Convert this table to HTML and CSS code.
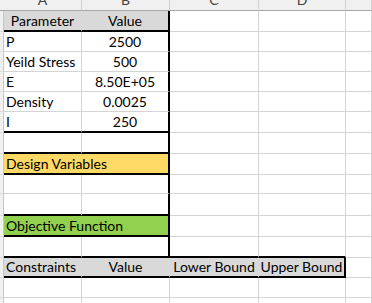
FILE: index.html
```html
<!DOCTYPE html>
<html lang="en">
<head>
<meta charset="utf-8">
<title>Sheet</title>
<link rel="stylesheet" href="styles.css">
</head>
<body>
<div class="sheet">
  <div class="hd corner"></div><div class="hd">A</div><div class="hd">B</div><div class="hd">C</div><div class="hd">D</div><div class="hd"></div>

  <div class="rh"></div><div class="c g tb tr0 ctr">Parameter</div><div class="c g tb tr ctr">Value</div><div class="c"></div><div class="c"></div><div class="c"></div>
  <div class="rh"></div><div class="c">P</div><div class="c tr ctr">2500</div><div class="c"></div><div class="c"></div><div class="c"></div>
  <div class="rh"></div><div class="c">Yeild Stress</div><div class="c tr ctr">500</div><div class="c"></div><div class="c"></div><div class="c"></div>
  <div class="rh"></div><div class="c">E</div><div class="c tr ctr">8.50E+05</div><div class="c"></div><div class="c"></div><div class="c"></div>
  <div class="rh"></div><div class="c">Density</div><div class="c tr ctr">0.0025</div><div class="c"></div><div class="c"></div><div class="c"></div>
  <div class="rh"></div><div class="c tb">I</div><div class="c tb tr ctr">250</div><div class="c"></div><div class="c"></div><div class="c"></div>
  <div class="rh"></div><div class="c tb"></div><div class="c tb tr"></div><div class="c"></div><div class="c"></div><div class="c"></div>
  <div class="rh"></div><div class="c y tb tr span2">Design Variables</div><div class="c"></div><div class="c"></div><div class="c"></div>
  <div class="rh"></div><div class="c"></div><div class="c tr"></div><div class="c"></div><div class="c"></div><div class="c"></div>
  <div class="rh"></div><div class="c tb"></div><div class="c tb tr"></div><div class="c"></div><div class="c"></div><div class="c"></div>
  <div class="rh"></div><div class="c gr tb tr span2">Objective Function</div><div class="c"></div><div class="c"></div><div class="c"></div>
  <div class="rh"></div><div class="c tb"></div><div class="c tb tr"></div><div class="c tb"></div><div class="c tb"></div><div class="c"></div>
  <div class="rh"></div><div class="c g tb tr0">Constraints</div><div class="c g tb tr0 ctr">Value</div><div class="c g tb tr0 ctr">Lower Bound</div><div class="c g tb tr ctr">Upper Bound</div><div class="c"></div>
  <div class="rh"></div><div class="c"></div><div class="c"></div><div class="c"></div><div class="c"></div><div class="c"></div>
  <div class="rh"></div><div class="c"></div><div class="c"></div><div class="c"></div><div class="c"></div><div class="c"></div>
</div>
</body>
</html>
```
FILE: styles.css
```css
html, body {
  margin: 0;
  padding: 0;
  overflow: hidden;
  background: #ffffff;
}

body {
  font-family: Lato, "Liberation Sans", sans-serif;
  font-size: 14px;
  color: #000000;
}

.sheet {
  display: grid;
  grid-template-columns: 4px 78px 88px 89px 87px 26px;
  grid-template-rows: 11px 21px 20px 20px 20px 20px 21px 21px 21px 19px 22px 21px 21px 20px 20px 12px;
}

.sheet > div {
  box-sizing: border-box;
  border-right: 1px solid #d4d4d4;
  border-bottom: 1px solid #d4d4d4;
  overflow: hidden;
  white-space: nowrap;
  display: flex;
  align-items: flex-end;
  line-height: 16px;
  padding: 0 2px 1px 2px;
}

.sheet > .hd {
  background: #f0f0f0;
  border-bottom-color: #a6a6a6;
  border-right-color: #d0d0d0;
  justify-content: center;
  color: #444444;
  padding-bottom: 2px;
}

.sheet > .corner {
  border-right-color: #c0c0c0;
}

.sheet > .rh {
  background: #f0f0f0;
  border-right-color: #c8c8c8;
  border-bottom-color: #dcdcdc;
  padding: 0;
}

.sheet > .ctr {
  justify-content: center;
}

.sheet > .g {
  background: #d9d9d9;
}

.sheet > .y {
  background: #ffd966;
}

.sheet > .gr {
  background: #92d050;
}

.sheet > .tb {
  border-bottom: 2px solid #000000;
}

.sheet > .tr {
  border-right: 2px solid #000000;
}

.sheet > .tr0 {
  border-right-color: transparent;
}

.sheet > .span2 {
  grid-column: span 2;
}
```
